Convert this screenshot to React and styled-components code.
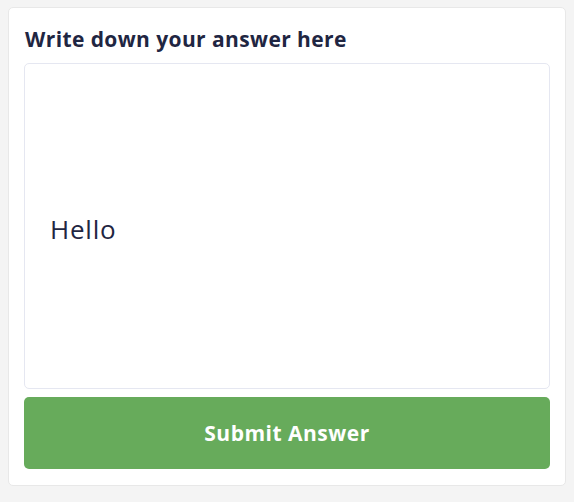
import React from "react";
import styled, { createGlobalStyle } from "styled-components";

const Global = createGlobalStyle`
  html, body { margin: 0; padding: 0; background: #f4f4f4; }
  body { padding: 7px 8px; font-family: "Open Sans", "Noto Sans", sans-serif; }
  * { box-sizing: border-box; }
`;

const Card = styled.section`
  width: 558px;
  height: 479px;
  background: #ffffff;
  border: 1px solid #e8e8e8;
  border-radius: 5px;
  padding: 17px 15px 16px 15px;
  display: flex;
  flex-direction: column;
`;

const Title = styled.h2`
  margin: 0 0 0 1px;
  font-family: "Open Sans", "Noto Sans", sans-serif;
  font-weight: 700;
  font-size: 21px;
  letter-spacing: 0.4px;
  line-height: 28px;
  color: #1f2642;
`;

const AnswerBox = styled.div`
  margin-top: 10px;
  height: 326px;
  border: 1px solid #e5e7f1;
  border-radius: 5px;
  display: flex;
  align-items: center;
  padding: 6px 25px 0 25px;
  font-size: 26px;
  letter-spacing: 0.8px;
  color: #1f2642;
  font-family: "Open Sans", "Noto Sans", sans-serif;
`;

const SubmitButton = styled.button`
  margin-top: 8px;
  height: 72px;
  border: none;
  border-radius: 5px;
  background: #67ab5b;
  color: #ffffff;
  font-family: "Open Sans", "Noto Sans", sans-serif;
  font-weight: 700;
  font-size: 21px;
  letter-spacing: 0.5px;
  cursor: pointer;
`;

export default function App() {
  return (
    <>
      <Global />
      <Card>
        <Title>Write down your answer here</Title>
        <AnswerBox role="textbox">Hello</AnswerBox>
        <SubmitButton>Submit Answer</SubmitButton>
      </Card>
    </>
  );
}
